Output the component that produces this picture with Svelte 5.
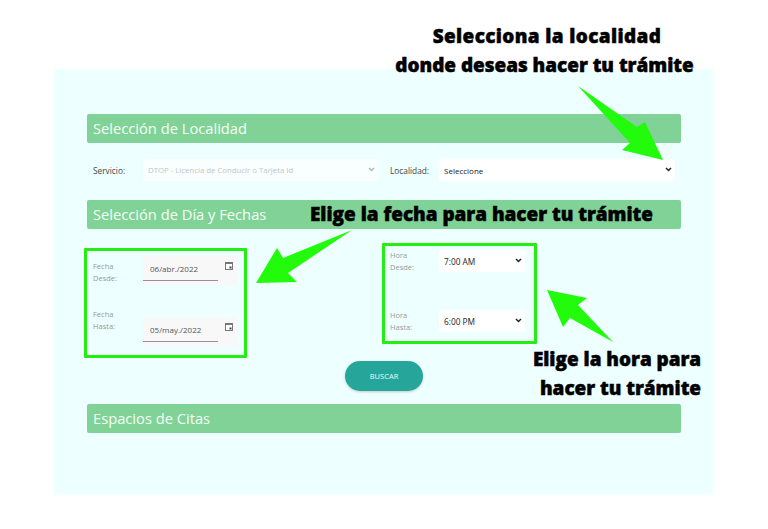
<script>
let servicio = "DTOP - Licencia de Conducir o Tarjeta Id";
let fechas = [
  { label1: "Fecha", label2: "Desde:", value: "06/abr./2022" },
  { label1: "Fecha", label2: "Hasta:", value: "05/may./2022" }
];
let horas = [
  { label1: "Hora", label2: "Desde:", value: "7:00 AM" },
  { label1: "Hora", label2: "Hasta:", value: "6:00 PM" }
];
</script>

{#snippet chevron(color)}
  <svg class="chev" width="7" height="5" viewBox="0 0 7 5">
    <path d="M1 1 L3.5 3.5 L6 1" fill="none" stroke={color} stroke-width="1.5" />
  </svg>
{/snippet}

<div class="page">
  <div class="panel">
    <div class="bar">Selección de Localidad</div>
    <div class="row-servicio">
      <span class="lbl">Servicio:</span>
      <div class="sel-wrap servicio">
        <select class="sel" disabled><option>{servicio}</option></select>
        {@render chevron("#b5b5b5")}
      </div>
      <span class="lbl localidad-lbl">Localidad:</span>
      <div class="sel-wrap localidad">
        <select class="sel"><option>Seleccione</option></select>
        {@render chevron("#222")}
      </div>
    </div>
    <div class="bar second">Selección de Día y Fechas</div>
    <div class="dates">
      <div class="box fechas">
        {#each fechas as f}
          <div class="date-row">
            <div class="small-lbl">{f.label1}<br />{f.label2}</div>
            <div class="date-input">
              <span class="date-val">{f.value}</span>
              <svg class="cal" width="8" height="8" viewBox="0 0 8 8">
                <rect x="0.5" y="0.5" width="7" height="7" fill="#fff" stroke="#777" />
                <rect x="0.5" y="0.5" width="7" height="1.5" fill="#777" />
                <rect x="4.5" y="4.5" width="2" height="2" fill="#444" />
              </svg>
            </div>
          </div>
        {/each}
      </div>
      <div class="box horas">
        {#each horas as h}
          <div class="hora-row">
            <div class="small-lbl">{h.label1}<br />{h.label2}</div>
            <div class="sel-wrap hora">
              <select class="sel"><option>{h.value}</option></select>
              {@render chevron("#222")}
            </div>
          </div>
        {/each}
      </div>
    </div>
    <div class="btn-wrap"><button class="buscar">BUSCAR</button></div>
    <div class="bar">Espacios de Citas</div>
  </div>

  <!-- anotaciones encima de la captura -->
  <svg class="arrows" width="768" height="529" viewBox="0 0 768 529">
    <g fill="#22fb0b">
      <polygon points="578,86 637,127 645,122 663,160 622,150 630,143" />
      <polygon points="352,230 283,258 277,248 256,283 297,282 288,273" />
      <polygon points="547,290 587,298 578,305 613,342 570,318 563,327" />
    </g>
  </svg>
  <div class="note n1"><span class="wide">Selecciona la localidad</span><br />donde deseas hacer tu trámite</div>
  <div class="note n2">Elige la fecha para hacer tu trámite</div>
  <div class="note n3">Elige la hora para<br /><span class="nudge">hacer tu trámite</span></div>
</div>

<style>
:global(body) {
  margin: 0;
  background: #fff;
}
.page {
  position: relative;
  width: 768px;
  height: 529px;
  overflow: hidden;
  padding-top: 69px;
  box-sizing: border-box;
  font-family: "Open Sans", sans-serif;
}
.panel {
  margin-left: 54px;
  width: 659px;
  height: 426px;
  box-sizing: border-box;
  background: #edffff;
  padding: 45px 32px 0 33px;
}
.bar {
  height: 29px;
  line-height: 29px;
  background: #81d297;
  border-radius: 2px;
  color: #f4fff6;
  font-size: 14.7px;
  padding-left: 6px;
  width: 594px;
  box-sizing: border-box;
}
.second {
  margin-top: 19px;
}
.row-servicio {
  display: flex;
  align-items: center;
  margin-top: 16px;
  height: 22px;
  padding-left: 6px;
}
.lbl {
  font-size: 8.3px;
  color: #444;
  width: 50px;
  flex: none;
}
.localidad-lbl {
  width: 49px;
  margin-left: 12px;
}
.sel-wrap {
  position: relative;
  flex: none;
  height: 22px;
}
.chev {
  position: absolute;
  right: 3px;
  top: 8px;
  pointer-events: none;
}
.sel {
  appearance: none;
  display: block;
  width: 100%;
  height: 100%;
  font-family: "Open Sans", sans-serif;
  background-color: #fff;
  border: none;
  border-radius: 2px;
  font-size: 8px;
  color: #222;
  padding: 0 0 0 5px;
  opacity: 1;
}
.servicio {
  width: 235px;
}
.servicio .sel {
  color: #c4c4c4;
  font-size: 7.8px;
  background-color: #f9ffff;
}
.localidad {
  width: 236px;
}
.dates {
  display: flex;
  align-items: flex-start;
  margin-top: 14px;
  margin-left: -3px;
}
.box {
  border: 3px solid #22ee12;
  border-radius: 1px;
  box-sizing: border-box;
}
.fechas {
  width: 163px;
  height: 110px;
  margin-top: 5px;
  padding: 5px 6px 0;
}
.date-row {
  display: flex;
  height: 29px;
  margin-bottom: 32px;
}
.small-lbl {
  font-size: 7.5px;
  line-height: 11.5px;
  color: #999;
  width: 49px;
  flex: none;
}
.date-row:first-child .small-lbl {
  margin-top: 5px;
}
.date-row:last-child .small-lbl {
  margin-top: -8px;
}
.date-input {
  position: relative;
  width: 96px;
  height: 29px;
  background: #f8f8f8;
  margin-left: 1px;
}
.date-input::after {
  content: "";
  position: absolute;
  left: 0;
  right: 20px;
  bottom: 4px;
  height: 1px;
  background: #9a8f98;
}
.date-val {
  position: absolute;
  left: 7px;
  top: 7px;
  font-size: 8px;
  color: #555;
}
.cal {
  position: absolute;
  right: 5px;
  top: 6px;
}
.horas {
  width: 155px;
  height: 101px;
  margin-left: 135px;
  padding: 4px 5px 0;
}
.hora-row {
  display: flex;
  height: 22px;
  margin-bottom: 38px;
}
.hora {
  width: 86px;
}
.hora .sel {
  font-size: 8.3px;
}
.btn-wrap {
  display: flex;
  justify-content: center;
  margin-top: 3px;
  margin-bottom: 13px;
  width: 594px;
}
.buscar {
  width: 78px;
  height: 30px;
  border: none;
  border-radius: 15px;
  background: #26a69a;
  color: #e8fbf8;
  font-family: "Open Sans", sans-serif;
  font-size: 7.5px;
  box-shadow: 0 1px 3px rgba(0, 0, 0, 0.2);
}
.arrows {
  position: absolute;
  left: 0;
  top: 0;
}
.note {
  position: absolute;
  font-family: "Open Sans", sans-serif;
  font-weight: 800;
  -webkit-text-stroke: 0.5px #000;
  color: #000;
  font-size: 18.9px;
  white-space: nowrap;
  text-align: center;
}
.wide {
  letter-spacing: 0.4px;
  margin-left: 5px;
}
.nudge {
  margin-left: 7px;
}
.n1 {
  left: 394px;
  width: 301px;
  top: 22px;
  line-height: 29px;
}
.n2 {
  left: 310px;
  width: 340px;
  top: 200px;
  line-height: 28px;
}
.n3 {
  left: 532px;
  width: 170px;
  top: 345px;
  line-height: 29px;
}
</style>
